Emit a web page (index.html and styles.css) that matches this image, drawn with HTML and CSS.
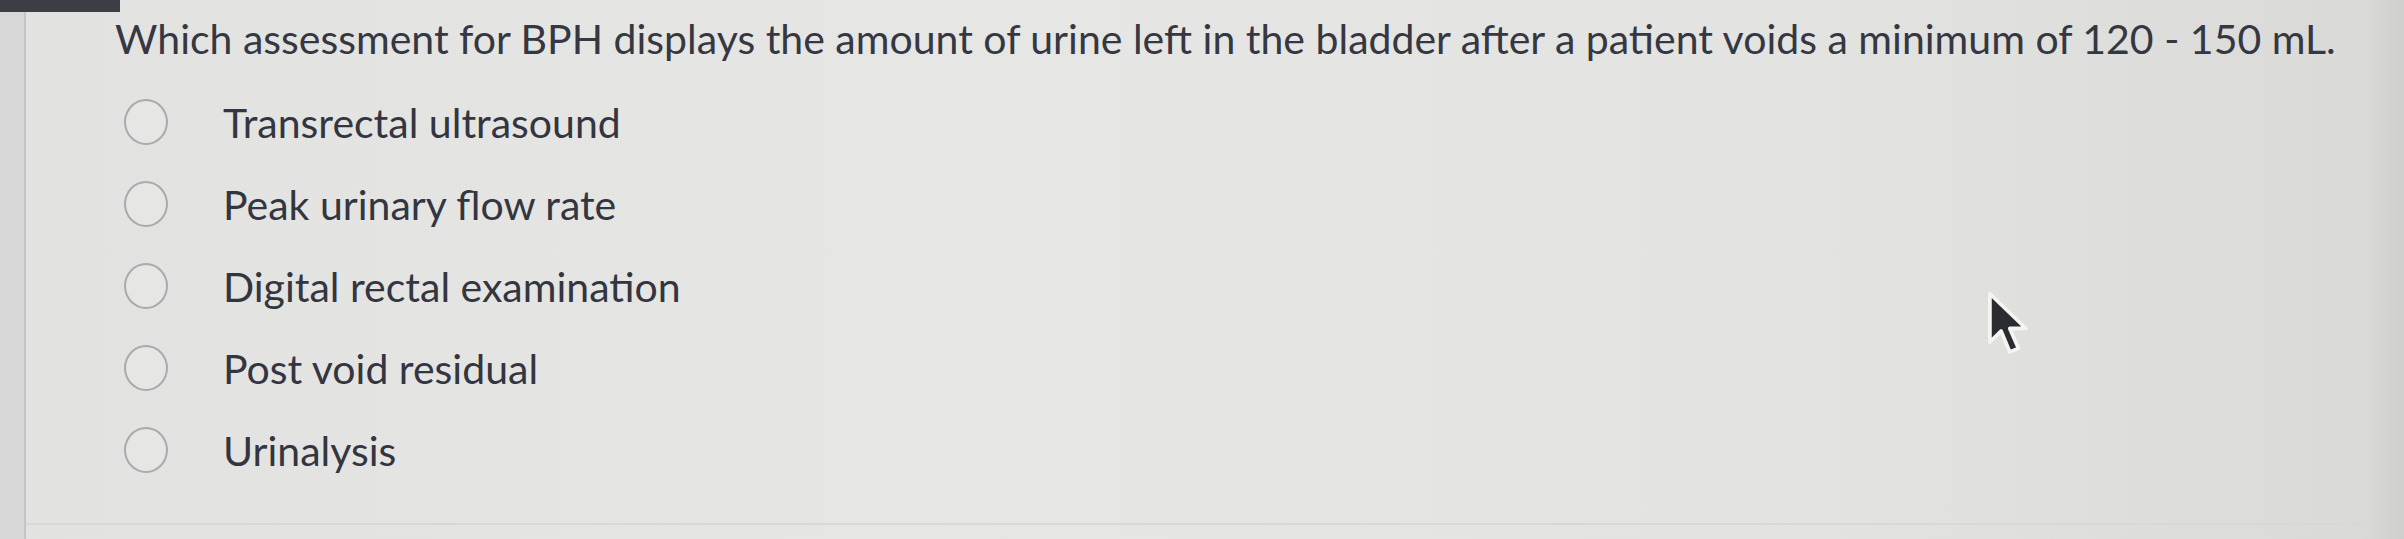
FILE: index.html
```html
<!DOCTYPE html>
<html>
<head>
<meta charset="utf-8">
<link rel="stylesheet" href="styles.css">
</head>
<body>
<div class="page">
  <div class="tab"></div>
  <aside class="rail"></aside>
  <main class="content">
    <p class="question">Which assessment for BPH displays the amount of urine left in the bladder after a patient voids a minimum of 120 - 150 mL.</p>
    <ul class="options">
      <li class="option"><span class="radio"></span><span class="label">Transrectal ultrasound</span></li>
      <li class="option"><span class="radio"></span><span class="label">Peak urinary flow rate</span></li>
      <li class="option"><span class="radio"></span><span class="label">Digital rectal examination</span></li>
      <li class="option"><span class="radio"></span><span class="label">Post void residual</span></li>
      <li class="option"><span class="radio"></span><span class="label">Urinalysis</span></li>
    </ul>
    <svg class="cursor" width="50" height="72" viewBox="0 0 40 58">
      <path d="M3 3 L3 42 L12 33 L19 50 L26 47 L19 31 L32 31 Z" fill="#2a2c30" stroke="#f4f4f2" stroke-width="3" stroke-linejoin="round"/>
    </svg>
  </main>
  <div class="edge"></div>
</div>
</body>
</html>
```
FILE: styles.css
```css
html, body {
  margin: 0;
  padding: 0;
}
body {
  width: 2404px;
  height: 539px;
  overflow: hidden;
  font-family: Lato, "Open Sans", sans-serif;
}
.page {
  position: relative;
  display: flex;
  width: 2404px;
  height: 539px;
  background: linear-gradient(90deg, #e2e3e1 0%, #e6e6e4 40%, #e3e3e1 75%, #d9d9d7 100%);
}
.tab {
  position: absolute;
  left: 0;
  top: 0;
  width: 120px;
  height: 12px;
  background: #3b3f44;
}
.rail {
  width: 24px;
  flex: 0 0 24px;
  background: #d6d7d6;
  border-right: 2px solid #c4c5c4;
}
.content {
  position: relative;
  flex: 1;
  padding: 13px 0 0 89px;
  border-bottom: 2px solid #d8d8d6;
  height: 510px;
}
.edge {
  width: 40px;
  flex: 0 0 40px;
  background: linear-gradient(90deg, #d9d9d7, #cfcfcd);
}
.question {
  margin: 0;
  font-size: 41px;
  line-height: 52px;
  color: #353742;
  white-space: nowrap;
}
.options {
  list-style: none;
  margin: 16px 0 0 0;
  padding: 0;
}
.option {
  display: flex;
  align-items: center;
  height: 82px;
}
.radio {
  width: 44px;
  height: 46px;
  box-sizing: border-box;
  border: 2px solid #a9aaab;
  border-radius: 50%;
  margin-left: 9px;
  margin-right: 55px;
  background: #e6e6e5;
}
.label {
  font-size: 41px;
  color: #333540;
}
.cursor {
  position: absolute;
  left: 1960px;
  top: 290px;
}
```
